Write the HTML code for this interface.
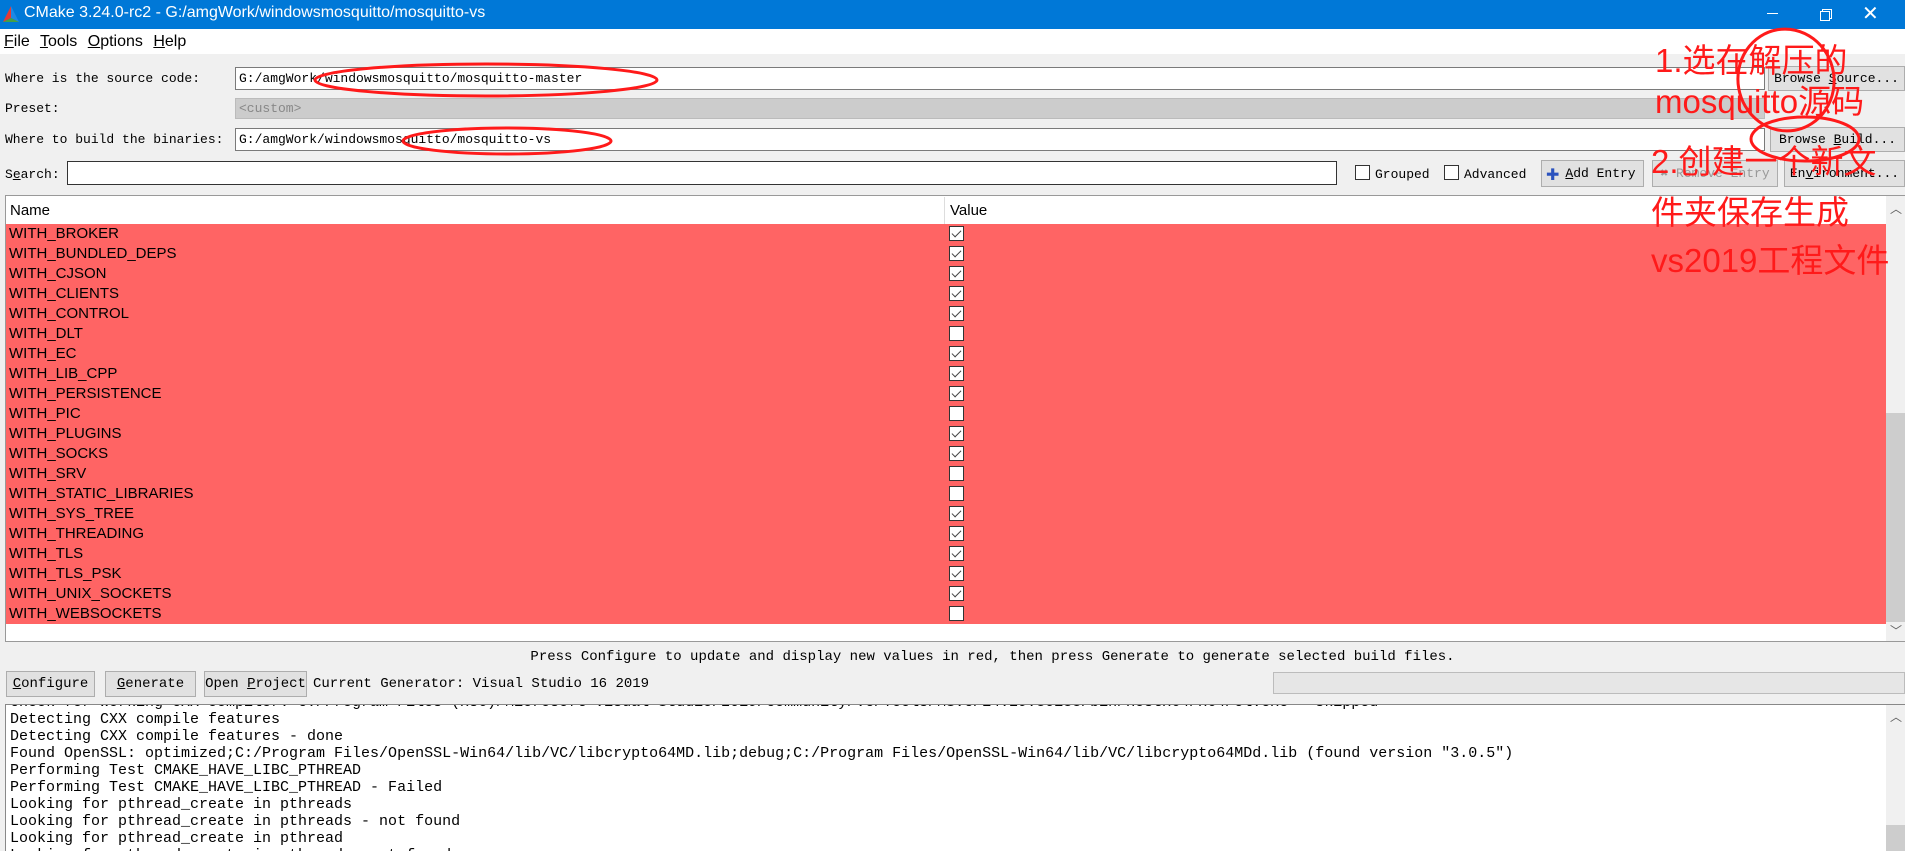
<!DOCTYPE html>
<html><head><meta charset="utf-8"><style>
*{margin:0;padding:0;box-sizing:border-box}
body{width:1905px;height:851px;overflow:hidden;background:#f0f0f0;position:relative;font-family:"Liberation Mono","Noto Sans CJK SC",monospace;font-size:13px;color:#000}
.a{position:absolute}
.mono{font-family:"Liberation Mono","Noto Sans CJK SC",monospace;font-size:13px}
.inp{background:#fff;border:1px solid #7a7a7a;line-height:21px;padding-left:3px;white-space:nowrap;overflow:hidden}
.btn{background:#e1e1e1;border:1px solid #adadad;text-align:center;white-space:nowrap}
.sans{font-family:"Liberation Sans","Noto Sans CJK SC",sans-serif}
.row{position:absolute;left:6px;width:1880px;height:20px;background:#ff6464;font-family:"Liberation Sans",sans-serif;font-size:15px;line-height:20px;padding-left:3px}
.cb{position:absolute;left:943px;top:2px;width:15px;height:15px;background:#fff;border:1px solid #333}
.cb.c::after{content:"";position:absolute;left:4px;top:1px;width:4px;height:8px;border:solid #444;border-width:0 1.5px 1.5px 0;transform:rotate(45deg)}
.log{font-size:15px;line-height:17px;white-space:pre}
.red{color:#ff1a1a;font-family:"Liberation Sans","Noto Sans CJK SC",sans-serif;font-size:33px;line-height:40px;white-space:nowrap}
u{text-decoration:underline}
</style></head><body>
<div class="a" style="left:0;top:0;width:1905px;height:29px;background:#0078d7"></div>
<svg class="a" style="left:2px;top:5px" width="18" height="18" viewBox="0 0 18 18"><polygon points="9,1 1,17 9,13" fill="#e53935"/><polygon points="9,1 17,17 9,13" fill="#1e88e5"/><polygon points="1,17 17,17 9,13" fill="#43a047"/></svg>
<div class="a sans" style="left:24px;top:4px;color:#fff;font-size:16px">CMake 3.24.0-rc2 - G:/amgWork/windowsmosquitto/mosquitto-vs</div>
<div class="a" style="left:1767px;top:13px;width:11px;height:1px;background:#fff"></div>
<div class="a" style="left:1822px;top:9px;width:10px;height:10px;border:1px solid #fff"></div>
<div class="a" style="left:1820px;top:11px;width:10px;height:10px;border:1px solid #fff;background:#0078d7"></div>
<div class="a" style="left:1862px;top:1px;color:#fff;font-size:20px;font-family:'DejaVu Sans'">✕</div>
<div class="a" style="left:0;top:29px;width:1905px;height:25px;background:#fff"></div>
<div class="a sans" style="left:4px;top:33px;font-size:16px;word-spacing:6px"><u>F</u>ile <u>T</u>ools <u>O</u>ptions <u>H</u>elp</div>

<div class="a mono" style="left:5px;top:71px">Where is the source code:</div>
<div class="a inp mono" style="left:235px;top:67px;width:1530px;height:23px">G:/amgWork/windowsmosquitto/mosquitto-master</div>
<div class="a btn mono" style="left:1768px;top:66px;width:137px;height:25px;line-height:23px">Browse <u>S</u>ource...</div>
<div class="a mono" style="left:5px;top:101px">Preset:</div>
<div class="a mono" style="left:235px;top:98px;width:1530px;height:21px;background:#ccc;border:1px solid #bbb;color:#888;padding-left:3px;line-height:19px">&lt;custom&gt;</div>
<div class="a mono" style="left:5px;top:132px">Where to build the binaries:</div>
<div class="a inp mono" style="left:235px;top:128px;width:1530px;height:23px">G:/amgWork/windowsmosquitto/mosquitto-vs</div>
<div class="a btn mono" style="left:1770px;top:127px;width:135px;height:25px;line-height:23px">Browse <u>B</u>uild...</div>
<div class="a mono" style="left:5px;top:167px">S<u>e</u>arch:</div>
<div class="a" style="left:67px;top:161px;width:1270px;height:24px;background:#fff;border:1px solid #333"></div>
<div class="a" style="left:1355px;top:165px;width:15px;height:15px;background:#fff;border:1px solid #333"></div>
<div class="a mono" style="left:1375px;top:167px">Grouped</div>
<div class="a" style="left:1444px;top:165px;width:15px;height:15px;background:#fff;border:1px solid #333"></div>
<div class="a mono" style="left:1464px;top:167px">Advanced</div>
<div class="a btn mono" style="left:1541px;top:160px;width:103px;height:27px;line-height:25px;padding-left:16px"><u>A</u>dd Entry</div>
<div class="a" style="left:1546px;top:165px;color:#2a52be;font-size:16px;font-weight:bold;font-family:'DejaVu Sans'">✚</div>
<div class="a btn mono" style="left:1652px;top:160px;width:126px;height:27px;line-height:25px;color:#999">✖ Remove Entry</div>
<div class="a btn mono" style="left:1784px;top:160px;width:121px;height:27px;line-height:25px">En<u>v</u>ironment...</div>

<div class="a" style="left:5px;top:195px;width:1900px;height:447px;background:#fff;border:1px solid #999"></div>
<div class="a sans" style="left:10px;top:202px;font-size:15px">Name</div>
<div class="a" style="left:944px;top:197px;width:1px;height:27px;background:#ddd"></div>
<div class="a sans" style="left:950px;top:202px;font-size:15px">Value</div>
<div class="a" style="left:1886px;top:196px;width:19px;height:445px;background:#f0f0f0"></div>
<div class="a" style="left:1886px;top:413px;width:19px;height:209px;background:#cdcdcd"></div>
<div class="a" style="left:1890px;top:200px;color:#606060;font-size:12px">︿</div>
<div class="a" style="left:1890px;top:622px;color:#606060;font-size:12px">﹀</div>

<div class="row" style="top:224px">WITH_BROKER<span class="cb c"></span></div>
<div class="row" style="top:244px">WITH_BUNDLED_DEPS<span class="cb c"></span></div>
<div class="row" style="top:264px">WITH_CJSON<span class="cb c"></span></div>
<div class="row" style="top:284px">WITH_CLIENTS<span class="cb c"></span></div>
<div class="row" style="top:304px">WITH_CONTROL<span class="cb c"></span></div>
<div class="row" style="top:324px">WITH_DLT<span class="cb"></span></div>
<div class="row" style="top:344px">WITH_EC<span class="cb c"></span></div>
<div class="row" style="top:364px">WITH_LIB_CPP<span class="cb c"></span></div>
<div class="row" style="top:384px">WITH_PERSISTENCE<span class="cb c"></span></div>
<div class="row" style="top:404px">WITH_PIC<span class="cb"></span></div>
<div class="row" style="top:424px">WITH_PLUGINS<span class="cb c"></span></div>
<div class="row" style="top:444px">WITH_SOCKS<span class="cb c"></span></div>
<div class="row" style="top:464px">WITH_SRV<span class="cb"></span></div>
<div class="row" style="top:484px">WITH_STATIC_LIBRARIES<span class="cb"></span></div>
<div class="row" style="top:504px">WITH_SYS_TREE<span class="cb c"></span></div>
<div class="row" style="top:524px">WITH_THREADING<span class="cb c"></span></div>
<div class="row" style="top:544px">WITH_TLS<span class="cb c"></span></div>
<div class="row" style="top:564px">WITH_TLS_PSK<span class="cb c"></span></div>
<div class="row" style="top:584px">WITH_UNIX_SOCKETS<span class="cb c"></span></div>
<div class="row" style="top:604px">WITH_WEBSOCKETS<span class="cb"></span></div>

<div class="a mono" style="left:0;top:649px;width:1905px;text-align:center;font-size:14px;padding-left:80px">Press Configure to update and display new values in red, then press Generate to generate selected build files.</div>
<div class="a btn mono" style="left:6px;top:671px;width:89px;height:26px;line-height:24px;font-size:14px"><u>C</u>onfigure</div>
<div class="a btn mono" style="left:105px;top:671px;width:91px;height:26px;line-height:24px;font-size:14px"><u>G</u>enerate</div>
<div class="a btn mono" style="left:204px;top:671px;width:103px;height:26px;line-height:24px;font-size:14px">Open <u>P</u>roject</div>
<div class="a mono" style="left:313px;top:676px;font-size:14px">Current Generator: Visual Studio 16 2019</div>
<div class="a" style="left:1273px;top:672px;width:632px;height:22px;background:#e6e6e6;border:1px solid #bcbcbc"></div>

<div class="a" style="left:5px;top:704px;width:1900px;height:147px;background:#fff;border-top:1px solid #888;border-left:1px solid #888;overflow:hidden">
<div class="a log" style="left:4px;top:-11px">Check for working CXX compiler: C:/Program Files (x86)/Microsoft Visual Studio/2019/Community/VC/Tools/MSVC/14.29.30133/bin/Hostx64/x64/cl.exe - skipped
Detecting CXX compile features
Detecting CXX compile features - done
Found OpenSSL: optimized;C:/Program Files/OpenSSL-Win64/lib/VC/libcrypto64MD.lib;debug;C:/Program Files/OpenSSL-Win64/lib/VC/libcrypto64MDd.lib (found version "3.0.5")
Performing Test CMAKE_HAVE_LIBC_PTHREAD
Performing Test CMAKE_HAVE_LIBC_PTHREAD - Failed
Looking for pthread_create in pthreads
Looking for pthread_create in pthreads - not found
Looking for pthread_create in pthread
Looking for pthread_create in pthread - not found</div>
<div class="a" style="left:1880px;top:0;width:19px;height:147px;background:#f0f0f0"></div>
<div class="a" style="left:1880px;top:120px;width:19px;height:27px;background:#cdcdcd"></div>
<div class="a" style="left:1884px;top:3px;color:#606060;font-size:12px">︿</div>
</div>

<svg class="a" style="left:0;top:0" width="1905" height="851">
<g fill="none" stroke="#ff1a1a" stroke-width="3">
<ellipse cx="486" cy="80" rx="171" ry="16"/>
<ellipse cx="507" cy="141" rx="104" ry="13"/>
<ellipse cx="1786" cy="80" rx="48" ry="51" transform="rotate(-10 1786 80)"/>
<ellipse cx="1805" cy="139" rx="54" ry="22"/>
</g></svg>
<div class="a red" style="left:1655px;top:41px">1.选在解压的</div>
<div class="a red" style="left:1655px;top:82px">mosquitto源码</div>
<div class="a red" style="left:1651px;top:142px">2.创建一个新文</div>
<div class="a red" style="left:1651px;top:193px">件夹保存生成</div>
<div class="a red" style="left:1651px;top:241px">vs2019工程文件</div>
</body></html>
